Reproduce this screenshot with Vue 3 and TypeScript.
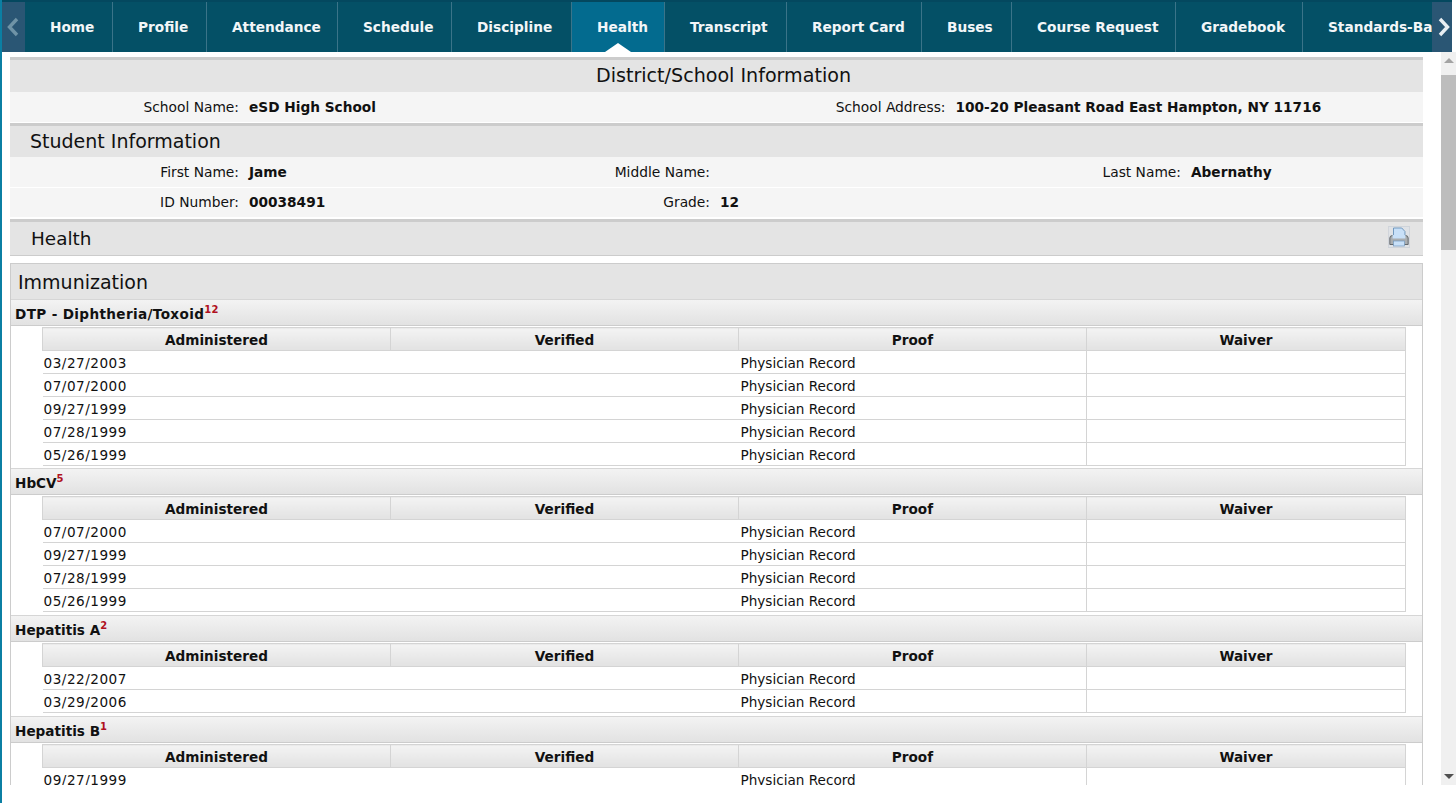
<script setup lang="ts">
const tabs = [
  { label: 'Home', width: 88 },
  { label: 'Profile', width: 94 },
  { label: 'Attendance', width: 131 },
  { label: 'Schedule', width: 114 },
  { label: 'Discipline', width: 120 },
  { label: 'Health', width: 93 },
  { label: 'Transcript', width: 122 },
  { label: 'Report Card', width: 135 },
  { label: 'Buses', width: 90 },
  { label: 'Course Request', width: 164 },
  { label: 'Gradebook', width: 127 },
  { label: 'Standards-Based', width: 150 },
]

const columns = ['Administered', 'Verified', 'Proof', 'Waiver']

const groups = [
  { name: 'DTP - Diphtheria/Toxoid', count: 12, dates: ['03/27/2003', '07/07/2000', '09/27/1999', '07/28/1999', '05/26/1999'] },
  { name: 'HbCV', count: 5, dates: ['07/07/2000', '09/27/1999', '07/28/1999', '05/26/1999'] },
  { name: 'Hepatitis A', count: 2, dates: ['03/22/2007', '03/29/2006'] },
  { name: 'Hepatitis B', count: 1, dates: ['09/27/1999'] },
]
</script>

<template>
  <div class="page">
    <nav class="nav">
      <button class="arrow arrow-left" type="button">
        <svg width="14" height="20" viewBox="0 0 14 20"><path d="M11 2 L3.5 10 L11 18" fill="none" stroke="#6f93a6" stroke-width="3.4" /></svg>
      </button>
      <ul class="tabs">
        <li
          v-for="tab in tabs"
          :key="tab.label"
          class="tab"
          :class="{ active: tab.label === 'Health' }"
          :style="{ width: tab.width + 'px' }"
        >{{ tab.label }}</li>
      </ul>
      <button class="arrow arrow-right" type="button">
        <svg width="14" height="20" viewBox="0 0 14 20"><path d="M3 2 L10.5 10 L3 18" fill="none" stroke="#e8eef2" stroke-width="3.4" /></svg>
      </button>
    </nav>

    <div class="body-row">
      <main class="content">
        <h2 class="band band-center">District/School Information</h2>
        <div class="info-row">
          <div class="info half"><span class="label">School Name:</span><b>eSD High School</b></div>
          <div class="info half"><span class="label">School Address:</span><b>100-20 Pleasant Road East Hampton, NY 11716</b></div>
        </div>

        <h2 class="band band-student">Student Information</h2>
        <div class="info-row">
          <div class="info third"><span class="label">First Name:</span><b>Jame</b></div>
          <div class="info third"><span class="label">Middle Name:</span></div>
          <div class="info third"><span class="label">Last Name:</span><b>Abernathy</b></div>
        </div>
        <div class="info-row second">
          <div class="info third"><span class="label">ID Number:</span><b>00038491</b></div>
          <div class="info third"><span class="label">Grade:</span><b>12</b></div>
        </div>

        <div class="health-bar">
          <h2>Health</h2>
          <svg class="printer" width="22" height="22" viewBox="0 0 24 22" preserveAspectRatio="none">
            <rect x="0.5" y="0.5" width="23" height="21" fill="#dfe2e6" stroke="#cfd4da" />
            <path d="M6 11 V2 H15 L18.5 5.5 V11 Z" fill="#c8e0f8" stroke="#6f96bd" />
            <path d="M2 12 Q2 9.5 5 9.5 H19 Q22 9.5 22 12 V18.5 H2 Z" fill="#a9adb0" stroke="#5f6468" />
            <rect x="5" y="9" width="14" height="3.5" fill="#c8e0f8" />
            <rect x="6" y="15" width="12" height="5" fill="#c8e0f8" stroke="#6f96bd" stroke-width="0.7" />
          </svg>
        </div>

        <section class="panel">
          <h2 class="panel-title">Immunization</h2>
          <template v-for="group in groups" :key="group.name">
            <h3 class="group-title">{{ group.name }}<sup>{{ group.count }}</sup></h3>
            <table class="records">
              <colgroup>
                <col class="col-wide" />
                <col class="col-wide" />
                <col class="col-wide" />
                <col />
              </colgroup>
              <thead>
                <tr><th v-for="col in columns" :key="col">{{ col }}</th></tr>
              </thead>
              <tbody>
                <tr v-for="(date, i) in group.dates" :key="i">
                  <td class="date">{{ date }}</td>
                  <td></td>
                  <td>Physician Record</td>
                  <td class="waiver"></td>
                </tr>
              </tbody>
            </table>
          </template>
        </section>
      </main>

      <aside class="scrollbar">
        <span class="tri tri-up"></span>
        <div class="track"><div class="thumb"></div></div>
        <span class="tri tri-down"></span>
      </aside>
    </div>
  </div>
</template>

<style scoped>
.page {
  width: 1454px;
  height: 803px;
  overflow: hidden;
  border-left: 2px solid #0b7fa3;
  background: #fff;
  font-family: "DejaVu Sans", Verdana, sans-serif;
  font-size: 13.7px;
  color: #111;
}

.nav {
  display: flex;
  height: 50px;
  border-top: 2px solid #04485f;
  background: #045066;
  margin-right: 4px;
}

.arrow {
  flex: none;
  width: 23px;
  padding: 0 2px 0 0;
  border: 0;
  display: flex;
  align-items: center;
  justify-content: center;
  background: #2a5674;
}

.arrow-right {
  width: 20px;
  padding: 0 0 0 4px;
}

.tabs {
  flex: 1;
  min-width: 0;
  display: flex;
  margin: 0;
  padding: 0;
  list-style: none;
  overflow: hidden;
}

.tab {
  position: relative;
  flex: none;
  box-sizing: border-box;
  padding-left: 25px;
  line-height: 50px;
  color: #f2f6f8;
  font-size: 13.7px;
  font-weight: 700;
  white-space: nowrap;
  border-right: 1px solid #3b7489;
}

.tab.active {
  background: #036b8f;
}

.tab.active::after {
  content: "";
  position: absolute;
  left: 50%;
  bottom: 0;
  margin-left: -13px;
  border-left: 13px solid transparent;
  border-right: 13px solid transparent;
  border-bottom: 9px solid #fff;
}

.body-row {
  display: flex;
  height: 733px;
}

.content {
  width: 1413px;
  margin: 0 18px 0 8px;
  padding-top: 5px;
  overflow: hidden;
}

.band {
  margin: 0;
  height: 32px;
  line-height: 32px;
  border-top: 3px solid #ccc;
  background: #e4e4e4;
  font-size: 19px;
  font-weight: 400;
}

.band-center {
  padding-left: 14px;
  text-align: center;
  font-size: 19.1px;
}

.band-student {
  height: 31px;
  line-height: 31px;
  margin-top: 1px;
  padding-left: 20px;
}

.info-row {
  display: flex;
  height: 30px;
  align-items: center;
  background: #f5f5f5;
}

.info-row.second {
  height: 28px;
  padding-bottom: 1px;
  border-top: 1px solid #fff;
}

.info {
  display: flex;
  gap: 10px;
}

.half {
  width: 50%;
}

.third {
  width: 33.333%;
}

.label {
  width: 229px;
  flex: none;
  text-align: right;
  font-size: 13.8px;
}

.info b {
  white-space: nowrap;
}

.health-bar {
  display: flex;
  justify-content: space-between;
  align-items: center;
  height: 33px;
  margin-top: 2px;
  padding: 0 13px 0 21px;
  border-top: 3px solid #ccc;
  border-bottom: 1px solid #ccc;
  background: #e4e4e4;
}

.health-bar h2 {
  margin: 0;
  font-size: 18.4px;
  font-weight: 400;
}

.printer {
  margin-bottom: 4px;
}

.panel {
  margin-top: 7px;
  border: 1px solid #ccc;
  border-bottom: 0;
}

.panel-title {
  margin: 0;
  height: 35px;
  line-height: 37px;
  padding-left: 7px;
  background: #e4e4e4;
  font-size: 19px;
  font-weight: 400;
}

.group-title {
  margin: 0;
  height: 25px;
  line-height: 29px;
  padding-left: 4px;
  border-top: 1px solid #d6d6d6;
  border-bottom: 1px solid #ccc;
  background: linear-gradient(#f3f3f3, #e2e2e2);
  font-size: 13.6px;
  font-weight: 700;
}

.group-title:first-of-type {
  letter-spacing: 0.35px;
}

.group-title sup {
  color: #b01020;
  font-size: 10px;
  line-height: 0;
}

.records {
  width: 1364px;
  margin: 1px 0 3px 31px;
  border-collapse: collapse;
  table-layout: fixed;
}

.records:first-of-type {
  margin-bottom: 2px;
}

.col-wide {
  width: 348px;
}

.records th {
  height: 20px;
  padding: 2px 0 0;
  border: 1px solid #d4d4d4;
  background: linear-gradient(#f3f3f3, #e2e2e2);
  font-size: 13.6px;
  font-weight: 700;
}

.records td {
  height: 20px;
  padding: 2px 2px 0;
  border-bottom: 1px solid #d4d4d4;
  font-size: 13.6px;
}

.records td.date {
  padding-left: 1px;
  letter-spacing: 0.5px;
}

.records td.waiver {
  border-left: 1px solid #d4d4d4;
  border-right: 1px solid #d4d4d4;
}

.scrollbar {
  width: 15px;
  flex: none;
  display: flex;
  flex-direction: column;
  align-items: center;
  background: #f0f0f0;
}

.track {
  flex: 1;
  width: 100%;
}

.thumb {
  height: 175px;
  margin-top: 6px;
  background: #bdbdbd;
}

.tri {
  flex: none;
  width: 0;
  height: 0;
  margin: 6px 0;
  border-left: 5px solid transparent;
  border-right: 5px solid transparent;
}

.tri-up {
  border-bottom: 5px solid #a3a3a3;
}

.tri-down {
  border-top: 5px solid #505050;
}
</style>
